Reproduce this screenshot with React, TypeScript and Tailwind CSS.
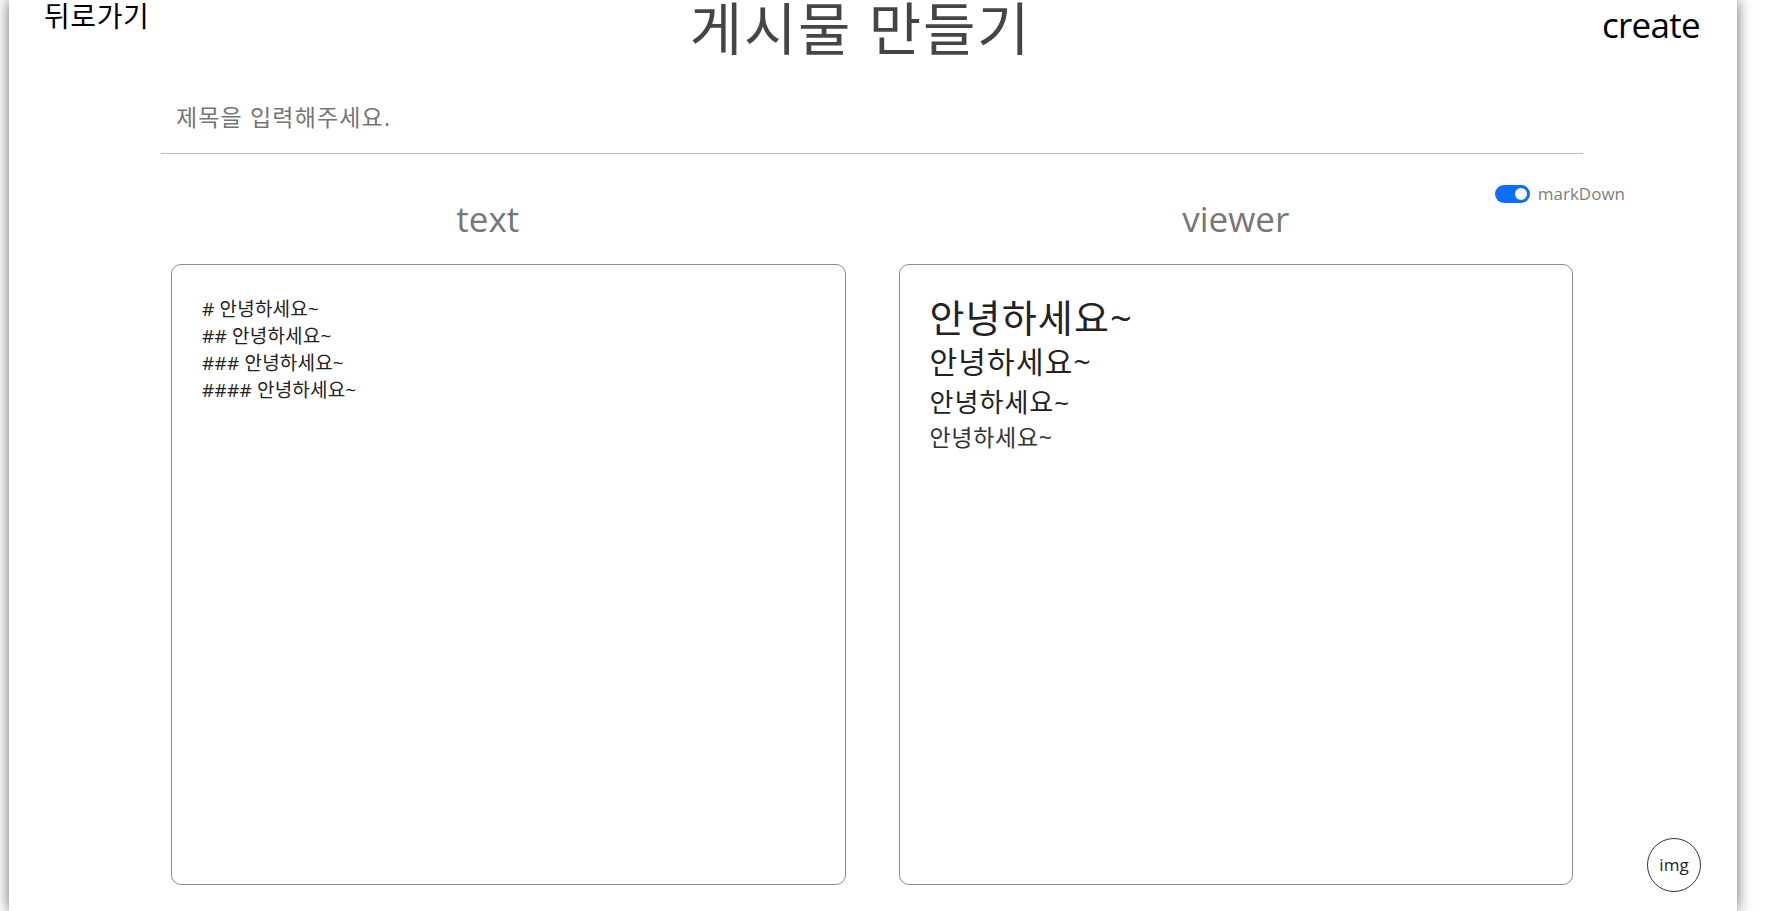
import { useState } from "react";

const source = `# 안녕하세요~
## 안녕하세요~
### 안녕하세요~
#### 안녕하세요~`;

const App = () => {
  const [markDown, setMarkDown] = useState(true);

  return (
    <div className="h-screen overflow-hidden bg-white font-['Open_Sans','Noto_Sans_CJK_KR',sans-serif]">
      <div className="relative ml-[9px] h-full w-[1728px] bg-white shadow-[0_0_14px_rgba(0,0,0,0.6)]">
        <header className="grid grid-cols-[1fr_auto_1fr] items-start pl-[35px] pr-[37px]">
          <button className="justify-self-start text-[28px] leading-[32px] tracking-[0.02em] text-black">뒤로가기</button>
          <h1 className="mr-[23px] text-[57px] leading-[56px] tracking-[0.03em] text-[#454545]">게시물 만들기</h1>
          <button className="justify-self-end text-[35px] leading-[49px] tracking-[-0.02em] text-black">create</button>
        </header>

        <input
          placeholder="제목을 입력해주세요."
          className="mt-[25px] ml-[152px] block h-[73px] w-[1422px] border-b border-[#bdbdbd] pl-[15px] text-[23px] tracking-[0.05em] text-[#222] outline-none placeholder:text-[#757575]"
        />

        <div className="mt-[31px] flex h-[18px] items-center justify-end gap-[8px] pr-[112px]">
          <button
            onClick={() => setMarkDown(!markDown)}
            className={
              markDown
                ? "flex h-[18px] w-[35px] items-center justify-end rounded-full bg-[#0d6efd] pr-[3px]"
                : "flex h-[18px] w-[35px] items-center justify-start rounded-full border border-[#bbb] bg-white pl-[3px]"
            }
          >
            <span className={markDown ? "h-[12px] w-[12px] rounded-full bg-white" : "h-[12px] w-[12px] rounded-full bg-[#bbb]"} />
          </button>
          <span className="text-[17px] leading-[18px] text-[#808080]">markDown</span>
        </div>

        <div className="ml-[162px] grid w-[1402px] grid-cols-2 gap-x-[53px]">
          <h2 className="pr-[41px] text-center text-[35px] leading-[32px] text-[#777]">text</h2>
          <h2 className="text-center text-[35px] leading-[32px] text-[#777]">viewer</h2>

          <textarea
            defaultValue={source}
            className="mt-[29px] h-[621px] resize-none rounded-[10px] border border-[#8c8c8c] pt-[31px] pl-[30px] text-[19px] leading-[27px] tracking-[0.01em] text-[#222] outline-none"
          />
          <div className="mt-[29px] h-[621px] rounded-[10px] border border-[#8c8c8c] pt-[27px] pl-[30px] text-[#222]">
            <div className="text-[38px] leading-[50px] tracking-[0.03em]">안녕하세요~</div>
            <div className="text-[30px] leading-[40px] tracking-[0.04em]">안녕하세요~</div>
            <div className="text-[26px] leading-[40px] tracking-[0.04em]">안녕하세요~</div>
            <div className="text-[23px] leading-[30px] tracking-[0.03em] text-[#333]">안녕하세요~</div>
          </div>
        </div>

        <button className="absolute right-[36px] bottom-[19px] flex h-[54px] w-[54px] items-center justify-center rounded-full border border-[#333] text-[17px] text-[#222]">
          img
        </button>
      </div>
    </div>
  );
};

export default App;
